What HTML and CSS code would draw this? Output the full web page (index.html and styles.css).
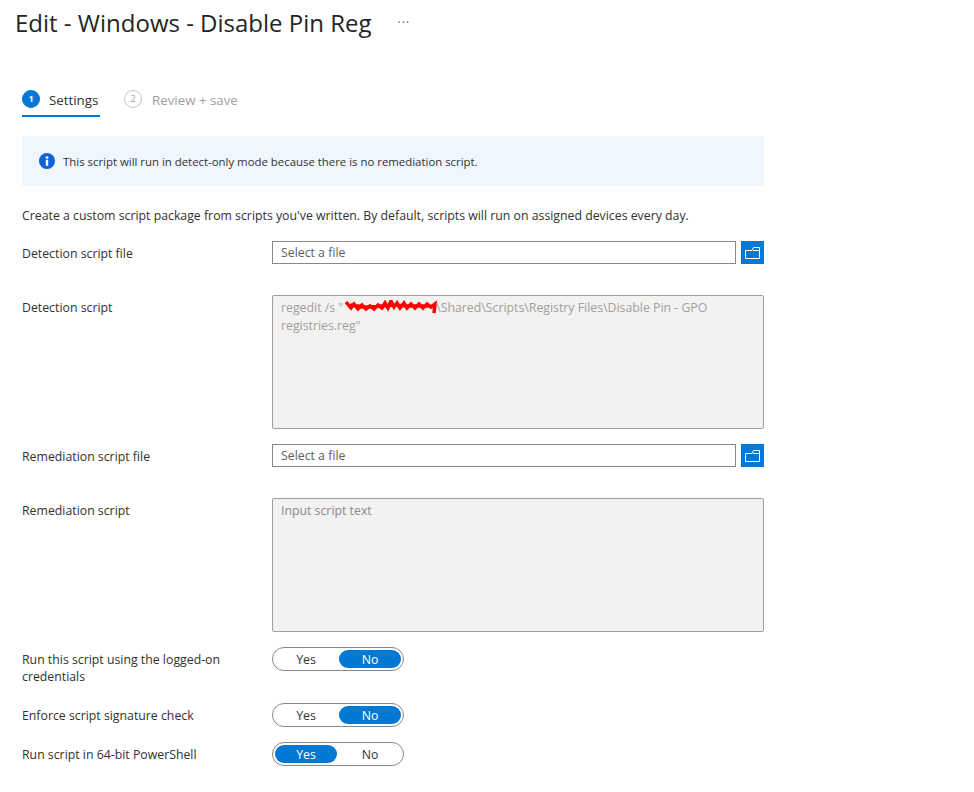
FILE: index.html
```html
<!DOCTYPE html>
<html lang="en">
<head>
	<meta charset="UTF-8">
	<title>Edit - Windows - Disable Pin Reg</title>
	<link rel="stylesheet" href="styles.css">
</head>
<body>
	<div class="header">
		<h1 class="title">Edit - Windows - Disable Pin Reg</h1>
		<span class="more">···</span>
	</div>
	<div class="content">
		<div class="steps">
			<div class="step current"><span class="num">1</span>Settings</div>
			<div class="step"><span class="num">2</span>Review + save</div>
		</div>
		<div class="notice">
			<svg class="info" width="16" height="16" viewBox="0 0 16 16"><circle cx="8" cy="8" r="8" fill="#0f62d6"/><rect x="6.8" y="6.8" width="2.4" height="6" fill="#fff"/><circle cx="8" cy="4.6" r="1.4" fill="#fff"/></svg>
			This script will run in detect-only mode because there is no remediation script.
		</div>
		<p class="desc">Create a custom script package from scripts you've written. By default, scripts will run on assigned devices every day.</p>

		<div class="row row-file">
			<label>Detection script file</label>
			<div class="file">
				<div class="input">Select a file</div>
				<div class="browse"><svg width="15" height="12" viewBox="0 0 15 12"><path d="M0.5 3.5H7L8.5 0.5H14.5V11.5H0.5ZM8 3.5H14.5" fill="none" stroke="#fff"/></svg></div>
			</div>
		</div>
		<div class="row row-area">
			<label>Detection script</label>
			<div class="area script">regedit /s "<svg class="scribble" width="93" height="16" viewBox="0 0 93 16"><path d="M1 2L6 8L9 4L13 9L17 5L21 9L25 6L29 9L33 5L37 8L40 3L43 8L46 1L49 7L52 3L55 8L59 3L62 8L66 4L70 8L74 4L78 8L82 4L86 7L90 4L89 13M5 5L20 7L35 6L50 5L65 6L85 6" fill="none" stroke="#f00" stroke-width="3.5"/></svg>\Shared\Scripts\Registry Files\Disable Pin - GPO<br>registries.reg"</div>
		</div>
		<div class="row row-file">
			<label>Remediation script file</label>
			<div class="file">
				<div class="input">Select a file</div>
				<div class="browse"><svg width="15" height="12" viewBox="0 0 15 12"><path d="M0.5 3.5H7L8.5 0.5H14.5V11.5H0.5ZM8 3.5H14.5" fill="none" stroke="#fff"/></svg></div>
			</div>
		</div>
		<div class="row row-area">
			<label>Remediation script</label>
			<div class="area">Input script text</div>
		</div>
		<div class="row row-toggle tall">
			<label>Run this script using the logged-on credentials</label>
			<div class="toggle"><span>Yes</span><span class="on">No</span></div>
		</div>
		<div class="row row-toggle">
			<label>Enforce script signature check</label>
			<div class="toggle"><span>Yes</span><span class="on">No</span></div>
		</div>
		<div class="row row-toggle">
			<label>Run script in 64-bit PowerShell</label>
			<div class="toggle"><span class="on">Yes</span><span>No</span></div>
		</div>
	</div>
</body>
</html>
```

FILE: styles.css
```css
* {
	margin: 0;
	padding: 0;
	box-sizing: border-box;
}
body {
	font-family: "Open Sans", "Liberation Sans", sans-serif;
	font-size: 12.3px;
	color: #323130;
	background: #fff;
}
.header {
	display: flex;
	align-items: center;
	height: 44px;
	padding-left: 15px;
}
.title {
	font-size: 24px;
	font-weight: 500;
	color: #252423;
}
.more {
	margin-left: 26px;
	font-size: 12px;
	letter-spacing: 1px;
	color: #605e5c;
}
.content {
	margin-left: 22px;
	width: 742px;
}
.steps {
	display: flex;
	gap: 24px;
	margin-top: 46px;
	height: 27px;
}
.step {
	display: flex;
	align-items: flex-start;
	font-size: 13.3px;
	color: #a19f9d;
	line-height: 20px;
	height: 27px;
}
.step.current {
	color: #323130;
	font-weight: 500;
	border-bottom: 2px solid #0078d4;
	width: 78px;
}
.num {
	width: 18px;
	height: 18px;
	margin-right: 10px;
	border: 1px solid #c8c6c4;
	border-radius: 50%;
	font-size: 9px;
	font-weight: 400;
	line-height: 16px;
	text-align: center;
}
.current .num {
	margin-right: 9px;
	background: #0078d4;
	border-color: #0078d4;
	color: #fff;
	font-weight: 700;
}
.notice {
	display: flex;
	align-items: center;
	gap: 8px;
	height: 50px;
	margin-top: 19px;
	padding-left: 17px;
	background: #eff6fe;
	font-size: 11.4px;
	color: #323130;
}
.desc {
	margin-top: 21px;
	line-height: 18px;
}
.row {
	display: grid;
	grid-template-columns: 250px 492px;
}
.row label {
	line-height: 18px;
}
.row-file {
	margin-top: 16px;
	height: 23px;
}
.row-file label {
	margin-top: 4px;
}
.row-area + .row-file {
	margin-top: 15px;
}
.row-area {
	margin-top: 31px;
}
.row-area label {
	margin-top: 4px;
}
.file {
	display: flex;
	gap: 5px;
}
.input {
	flex: 1;
	height: 23px;
	padding-left: 8px;
	border: 1px solid #8a8886;
	line-height: 21px;
	color: #605e5c;
}
.browse {
	display: flex;
	align-items: center;
	justify-content: center;
	width: 23px;
	height: 23px;
	background: #0078d4;
}
.area {
	height: 134px;
	padding: 3px 8px;
	background: #f3f2f1;
	border: 1px solid #a19f9d;
	border-radius: 2px;
	line-height: 18px;
	color: #8a8886;
}
.area.script {
	color: #a19f9d;
}
.scribble {
	margin: 0 -2px 0 2px;
	vertical-align: -4px;
}
.row-toggle {
	margin-top: 15px;
	height: 24px;
}
.row-toggle label {
	margin-top: 4px;
}
.row-toggle.tall {
	height: 34px;
}
.row-toggle.tall label {
	line-height: 17px;
}
.row-toggle.tall + .row-toggle {
	margin-top: 22px;
}
.toggle {
	display: grid;
	grid-template-columns: 1fr 1fr;
	gap: 2px;
	width: 132px;
	height: 24px;
	padding: 2px;
	border: 1px solid #8a8886;
	border-radius: 12px;
}
.toggle span {
	padding-top: 1px;
	line-height: 17px;
	text-align: center;
}
.toggle .on {
	background: #0078d4;
	border-radius: 9px;
	color: #fff;
}
```
